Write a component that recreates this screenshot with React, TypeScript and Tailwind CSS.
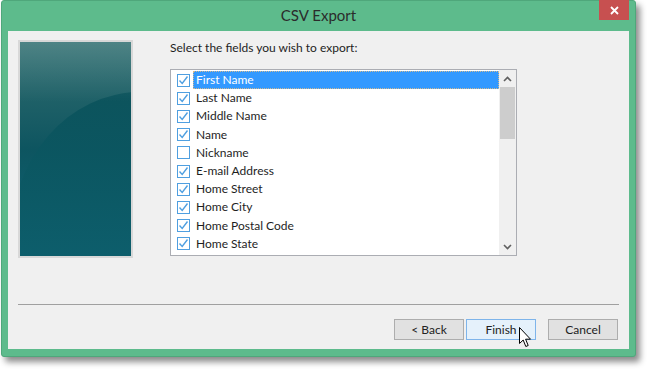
import React from 'react';

const fields = [
  { label: 'First Name', checked: true },
  { label: 'Last Name', checked: true },
  { label: 'Middle Name', checked: true },
  { label: 'Name', checked: true },
  { label: 'Nickname', checked: false },
  { label: 'E-mail Address', checked: true },
  { label: 'Home Street', checked: true },
  { label: 'Home City', checked: true },
  { label: 'Home Postal Code', checked: true },
  { label: 'Home State', checked: true },
];

function CheckBox({ checked }: { checked: boolean }) {
  return (
    <div className="w-[13px] h-[13px] border border-[#4f9fe0] bg-white flex items-center justify-center shrink-0">
      {checked && (
        <svg width="11" height="11" viewBox="0 0 11 11">
          <path d="M1.5 5.5 L4.2 8.5 L9.5 1.5" fill="none" stroke="#4f9fe0" strokeWidth="1.4" />
        </svg>
      )}
    </div>
  );
}

function Button({ label, focused }: { label: string; focused?: boolean }) {
  return (
    <div
      className={
        focused
          ? 'w-[70px] h-[21px] border border-[#7eb4ea] bg-[#e5f1fb] flex items-center justify-center text-[12px] text-[#222]'
          : 'w-[70px] h-[21px] border border-[#adadad] bg-[#e1e1e1] flex items-center justify-center text-[12px] text-[#222]'
      }
    >
      {label}
    </div>
  );
}

export default function App() {
  return (
    <div className="w-[650px] h-[372px] bg-white relative" style={{ fontFamily: 'Lato, "Noto Sans", sans-serif' }}>
      <div className="ml-[1px] w-[635px] h-[357px] bg-[#5dbb8c] border border-[#4fa77b] rounded-[3px] flex flex-col shadow-[4px_5px_6px_rgba(0,0,0,0.45)]">
        {/* title bar */}
        <div className="h-[30px] relative flex justify-center pt-[4px] shrink-0">
          <span className="text-[15px] leading-[20px] text-[#2b2b2b]">CSV Export</span>
          <div className="absolute top-[-1px] right-[6px] w-[30px] h-[20px] bg-[#c75050] flex items-center justify-center">
            <svg width="9" height="9" viewBox="0 0 9 9">
              <path d="M1 1 L8 8 M8 1 L1 8" stroke="white" strokeWidth="1.8" />
            </svg>
          </div>
        </div>

        {/* client area */}
        <div className="mx-[6px] mb-[7px] flex-1 bg-[#f0f0f0] flex flex-col">
          <div className="flex pt-[9px] pl-[10px]">
            <div className="w-[115px] h-[218px] bg-[#d8d8d8] p-[2px] shrink-0">
              <div className="w-full h-full relative overflow-hidden bg-gradient-to-b from-[#2f6e70] via-[#0d5560] to-[#0f6678]">
                <div className="absolute left-[-10px] top-[50px] w-[260px] h-[300px] rounded-[50%] bg-gradient-to-b from-[#0a525b] to-[#0f6677] opacity-90"></div>
                <div className="absolute inset-0 bg-gradient-to-b from-[rgba(255,255,255,0.15)] to-transparent h-[60px]"></div>
              </div>
            </div>
            <div className="ml-[37px] flex flex-col">
              <div className="h-[16px] mb-[13px] flex items-center text-[12px] text-[#1e1e1e]">Select the fields you wish to export:</div>
              <div className="w-[347px] h-[187px] border border-[#abadb3] bg-white flex">
                <div className="flex-1 pt-[1px] flex flex-col">
                  {fields.map((f, i) => (
                    <div key={f.label} className="h-[18.2px] flex items-center pl-[6px]">
                      <CheckBox checked={f.checked} />
                      <div
                        className={
                          i === 0
                            ? 'ml-[3px] flex-1 h-[18px] flex items-center pl-[2px] bg-[#3399ff] text-white border border-dotted border-[#d0b890] text-[12px]'
                            : 'ml-[3px] flex-1 h-[18px] flex items-center pl-[3px] text-[12px] text-[#1e1e1e]'
                        }
                      >
                        {f.label}
                      </div>
                    </div>
                  ))}
                </div>
                <div className="w-[17px] bg-[#f0f0f0] flex flex-col">
                  <div className="h-[17px] flex items-center justify-center">
                    <svg width="9" height="6" viewBox="0 0 9 6">
                      <path d="M1 5 L4.5 1.5 L8 5" fill="none" stroke="#606060" strokeWidth="1.6" />
                    </svg>
                  </div>
                  <div className="h-[52px] bg-[#cdcdcd] mx-[1px]"></div>
                  <div className="flex-1"></div>
                  <div className="h-[17px] flex items-center justify-center">
                    <svg width="9" height="6" viewBox="0 0 9 6">
                      <path d="M1 1 L4.5 4.5 L8 1" fill="none" stroke="#606060" strokeWidth="1.6" />
                    </svg>
                  </div>
                </div>
              </div>
            </div>
          </div>

          <div className="flex-1"></div>
          <div className="mx-[10px] h-px bg-[#a0a0a0]"></div>
          <div className="flex justify-end pr-[11px] pt-[14px] pb-[9px] relative">
            <Button label="< Back" />
            <div className="ml-[2px]">
              <Button label="Finish" focused />
            </div>
            <div className="ml-[12px]">
              <Button label="Cancel" />
            </div>
            <svg className="absolute left-[511px] top-[22px]" width="13" height="21" viewBox="0 0 13 21">
              <path d="M0.5 0.5 L0.5 16.5 L4.2 13 L6.8 19.5 L9.2 18.5 L6.6 12.2 L11.5 12.2 Z" fill="white" stroke="black" strokeWidth="1" strokeLinejoin="round" />
            </svg>
          </div>
        </div>
      </div>
    </div>
  );
}
